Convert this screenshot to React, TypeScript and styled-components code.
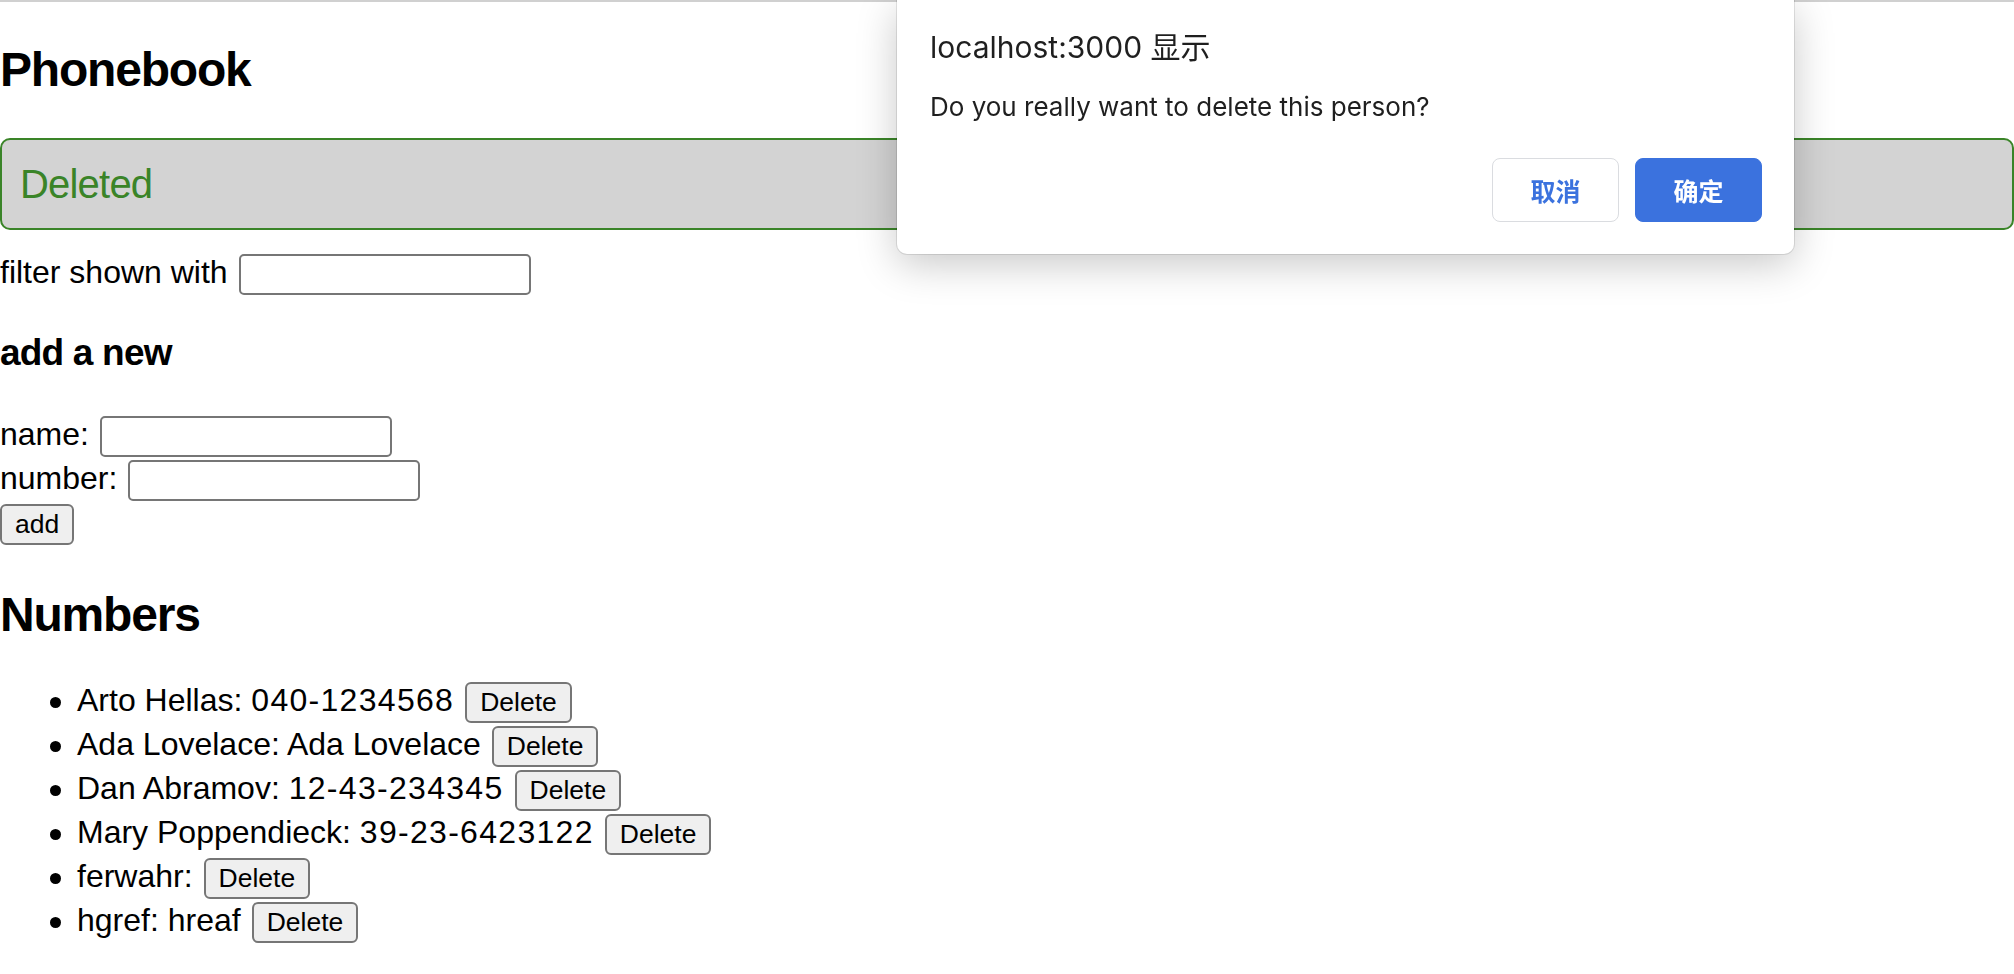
import styled, { createGlobalStyle } from "styled-components"

const GlobalStyle = createGlobalStyle`
  html,
  body {
    margin: 0;
    padding: 0;
    background: #fff;
  }

  body {
    font-family: "Liberation Sans", Arial, sans-serif;
    color: #000;
  }
`

const Page = styled.div`
  position: relative;
  min-height: 972px;
  border-top: 2px solid #d0d0d0;
  font-size: 32px;
`

const Heading = styled.h2`
  margin: 40px 0 41px;
  font-size: 48px;
  line-height: 55px;
  font-weight: 700;
  letter-spacing: -1.2px;
`

const SubHeading = styled.h3`
  margin: 35px 0 40px;
  font-size: 37px;
  line-height: 43px;
  font-weight: 700;
  letter-spacing: -0.8px;
`

const Notification = styled.div<{ $kind: "success" | "error" }>`
  box-sizing: border-box;
  height: 92px;
  margin-bottom: 22px;
  padding: 18px;
  border: 2.5px solid ${(p) => (p.$kind === "error" ? "#d0302a" : "#3a8428")};
  border-radius: 10px;
  background: #d3d3d3;
  color: ${(p) => (p.$kind === "error" ? "#d0302a" : "#3a8428")};
  font-size: 40px;
  line-height: 52px;
  letter-spacing: -0.8px;
`

const Field = styled.div`
  display: flex;
  align-items: center;
  gap: 11px;
  height: 44px;
`

const Label = styled.span`
  margin-bottom: 4px;
  white-space: nowrap;
`

const Input = styled.input`
  box-sizing: border-box;
  width: 292px;
  height: 41px;
  margin: 0;
  padding: 2px 6px;
  border: 2px solid #767676;
  border-radius: 5px;
  background: #fff;
  font: 26px "Liberation Sans", Arial, sans-serif;
`

const Button = styled.button`
  box-sizing: border-box;
  height: 41px;
  margin: 0;
  padding: 0 13px;
  border: 2px solid #767676;
  border-radius: 6px;
  background: #efefef;
  color: #000;
  font: 26.5px "Liberation Sans", Arial, sans-serif;
`

const NumbersHeading = styled(Heading)`
  margin: 41px 0 38px;
`

const List = styled.ul`
  margin: 0;
  padding: 0 0 0 50px;
  list-style: none;
`

const Item = styled.li`
  display: flex;
  align-items: center;
  gap: 11px;
  height: 44px;

  &::before {
    content: "";
    width: 11px;
    height: 11px;
    margin-right: 5px;
    border-radius: 50%;
    background: #000;
  }
`

const Phone = styled.span<{ $digits: boolean }>`
  letter-spacing: ${(p) => (p.$digits ? "1.3px" : "0")};
`

const Dialog = styled.div`
  position: fixed;
  top: 0;
  left: 897px;
  width: 897px;
  box-sizing: border-box;
  padding: 28px 32px 32px 33px;
  border-radius: 0 0 10px 10px;
  background: #fff;
  box-shadow: 0 0 0 1px rgba(0, 0, 0, 0.1), 0 10px 40px rgba(0, 0, 0, 0.22);
  color: #1f1f1f;
  font-family: Inter, "Noto Sans CJK SC", sans-serif;
`

const DialogTitle = styled.div`
  font-size: 30px;
  line-height: 38px;
`

const DialogMessage = styled.div`
  margin-top: 22px;
  font-size: 26px;
  line-height: 38px;
`

const DialogActions = styled.div`
  display: flex;
  justify-content: flex-end;
  gap: 16px;
  margin-top: 32px;
`

const DialogButton = styled.button<{ $primary?: boolean }>`
  box-sizing: border-box;
  width: 127px;
  height: 64px;
  border: 1.5px solid ${(p) => (p.$primary ? "#3b72de" : "#dadce0")};
  border-radius: 8px;
  background: ${(p) => (p.$primary ? "#3b72de" : "#fff")};
  color: ${(p) => (p.$primary ? "#fff" : "#3b72de")};
  font: 700 25px "Noto Sans CJK SC", sans-serif;
`

const persons = [
  { name: "Arto Hellas", number: "040-1234568" },
  { name: "Ada Lovelace", number: "Ada Lovelace" },
  { name: "Dan Abramov", number: "12-43-234345" },
  { name: "Mary Poppendieck", number: "39-23-6423122" },
  { name: "ferwahr", number: "" },
  { name: "hgref", number: "hreaf" },
]

const App = () => {
  return (
    <Page>
      <GlobalStyle />
      <Heading>Phonebook</Heading>
      <Notification $kind="success">Deleted</Notification>

      <Field>
        <Label>filter shown with</Label>
        <Input />
      </Field>

      <SubHeading>add a new</SubHeading>
      <form onSubmit={(e) => e.preventDefault()}>
        <Field>
          <Label>name:</Label>
          <Input />
        </Field>
        <Field>
          <Label>number:</Label>
          <Input />
        </Field>
        <Field>
          <Button type="submit">add</Button>
        </Field>
      </form>

      <NumbersHeading>Numbers</NumbersHeading>
      <List>
        {persons.map((p) => (
          <Item key={p.name}>
            <Label>
              {p.name}: <Phone $digits={/\d/.test(p.number)}>{p.number}</Phone>
            </Label>
            <Button>Delete</Button>
          </Item>
        ))}
      </List>

      <Dialog>
        <DialogTitle>localhost:3000 显示</DialogTitle>
        <DialogMessage>Do you really want to delete this person?</DialogMessage>
        <DialogActions>
          <DialogButton>取消</DialogButton>
          <DialogButton $primary>确定</DialogButton>
        </DialogActions>
      </Dialog>
    </Page>
  )
}

export default App
